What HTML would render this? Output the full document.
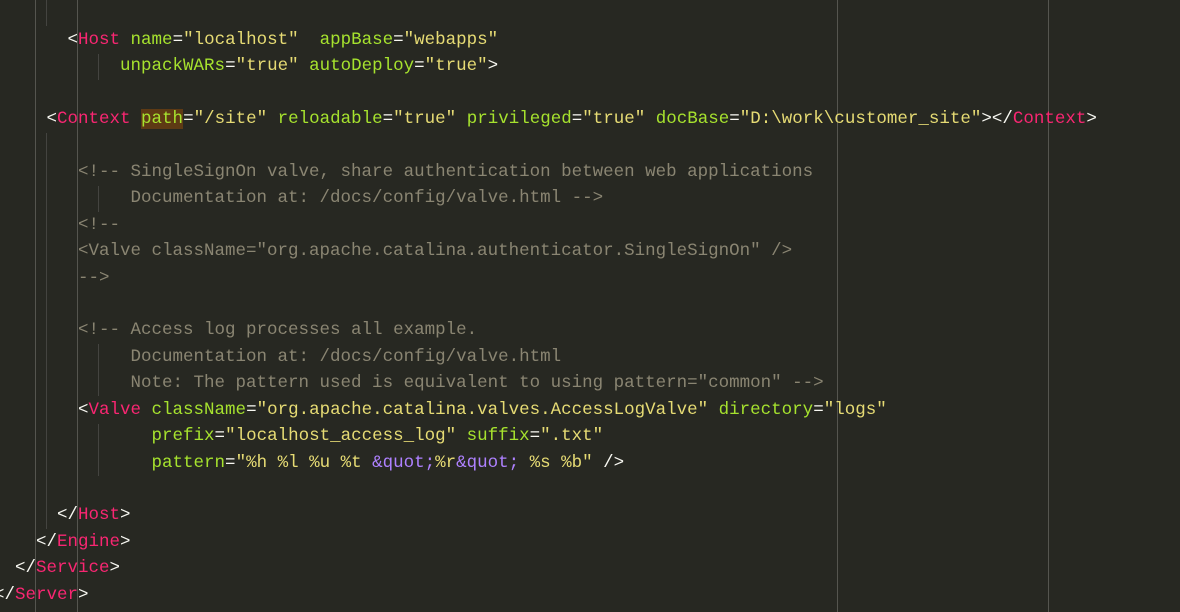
<!DOCTYPE html>
<html><head><meta charset="utf-8"><style>
html,body{margin:0;padding:0;background:#272822;width:1180px;height:612px;overflow:hidden;position:relative}
pre{position:absolute;left:-6px;top:27px;margin:0;font-family:"Liberation Mono",monospace;font-size:17.5px;line-height:26.4px;color:#f8f8f2;white-space:pre}
.t{color:#f92672}.a{color:#a6e22e}.s{color:#e6db74}.c{color:#8a8572}.e{color:#ae81ff}
.hl{background:#5e3a14}
.v{position:absolute;width:1px}
</style></head><body>
<div class="v" style="left:35px;top:0;height:612px;background:#55554f"></div>
<div class="v" style="left:77px;top:0;height:612px;background:#55554f"></div>
<div class="v" style="left:837px;top:0;height:612px;background:#55554f"></div>
<div class="v" style="left:1048px;top:0;height:612px;background:#55554f"></div>
<div class="v" style="left:46px;top:0;height:26px;background:#444440"></div>
<div class="v" style="left:46px;top:133px;height:396px;background:#444440"></div>
<div class="v" style="left:98px;top:54px;height:26px;background:#444440"></div>
<div class="v" style="left:98px;top:186px;height:26px;background:#444440"></div>
<div class="v" style="left:98px;top:344px;height:52px;background:#444440"></div>
<div class="v" style="left:98px;top:424px;height:52px;background:#444440"></div>
<pre>       &lt;<span class="t">Host</span> <span class="a">name</span>=<span class="s">"localhost"</span>  <span class="a">appBase</span>=<span class="s">"webapps"</span>
            <span class="a">unpackWARs</span>=<span class="s">"true"</span> <span class="a">autoDeploy</span>=<span class="s">"true"</span>&gt;

     &lt;<span class="t">Context</span> <span class="a hl">path</span>=<span class="s">"/site"</span> <span class="a">reloadable</span>=<span class="s">"true"</span> <span class="a">privileged</span>=<span class="s">"true"</span> <span class="a">docBase</span>=<span class="s">"D:\work\customer_site"</span>&gt;&lt;/<span class="t">Context</span>&gt;

<span class="c">        &lt;!-- SingleSignOn valve, share authentication between web applications
             Documentation at: /docs/config/valve.html --&gt;
        &lt;!--
        &lt;Valve className="org.apache.catalina.authenticator.SingleSignOn" /&gt;
        --&gt;</span>

<span class="c">        &lt;!-- Access log processes all example.
             Documentation at: /docs/config/valve.html
             Note: The pattern used is equivalent to using pattern="common" --&gt;</span>
        &lt;<span class="t">Valve</span> <span class="a">className</span>=<span class="s">"org.apache.catalina.valves.AccessLogValve"</span> <span class="a">directory</span>=<span class="s">"logs"</span>
               <span class="a">prefix</span>=<span class="s">"localhost_access_log"</span> <span class="a">suffix</span>=<span class="s">".txt"</span>
               <span class="a">pattern</span>=<span class="s">"%h %l %u %t <span class="e">&amp;quot;</span>%r<span class="e">&amp;quot;</span> %s %b"</span> /&gt;

      &lt;/<span class="t">Host</span>&gt;
    &lt;/<span class="t">Engine</span>&gt;
  &lt;/<span class="t">Service</span>&gt;
&lt;/<span class="t">Server</span>&gt;
</pre>
</body></html>
